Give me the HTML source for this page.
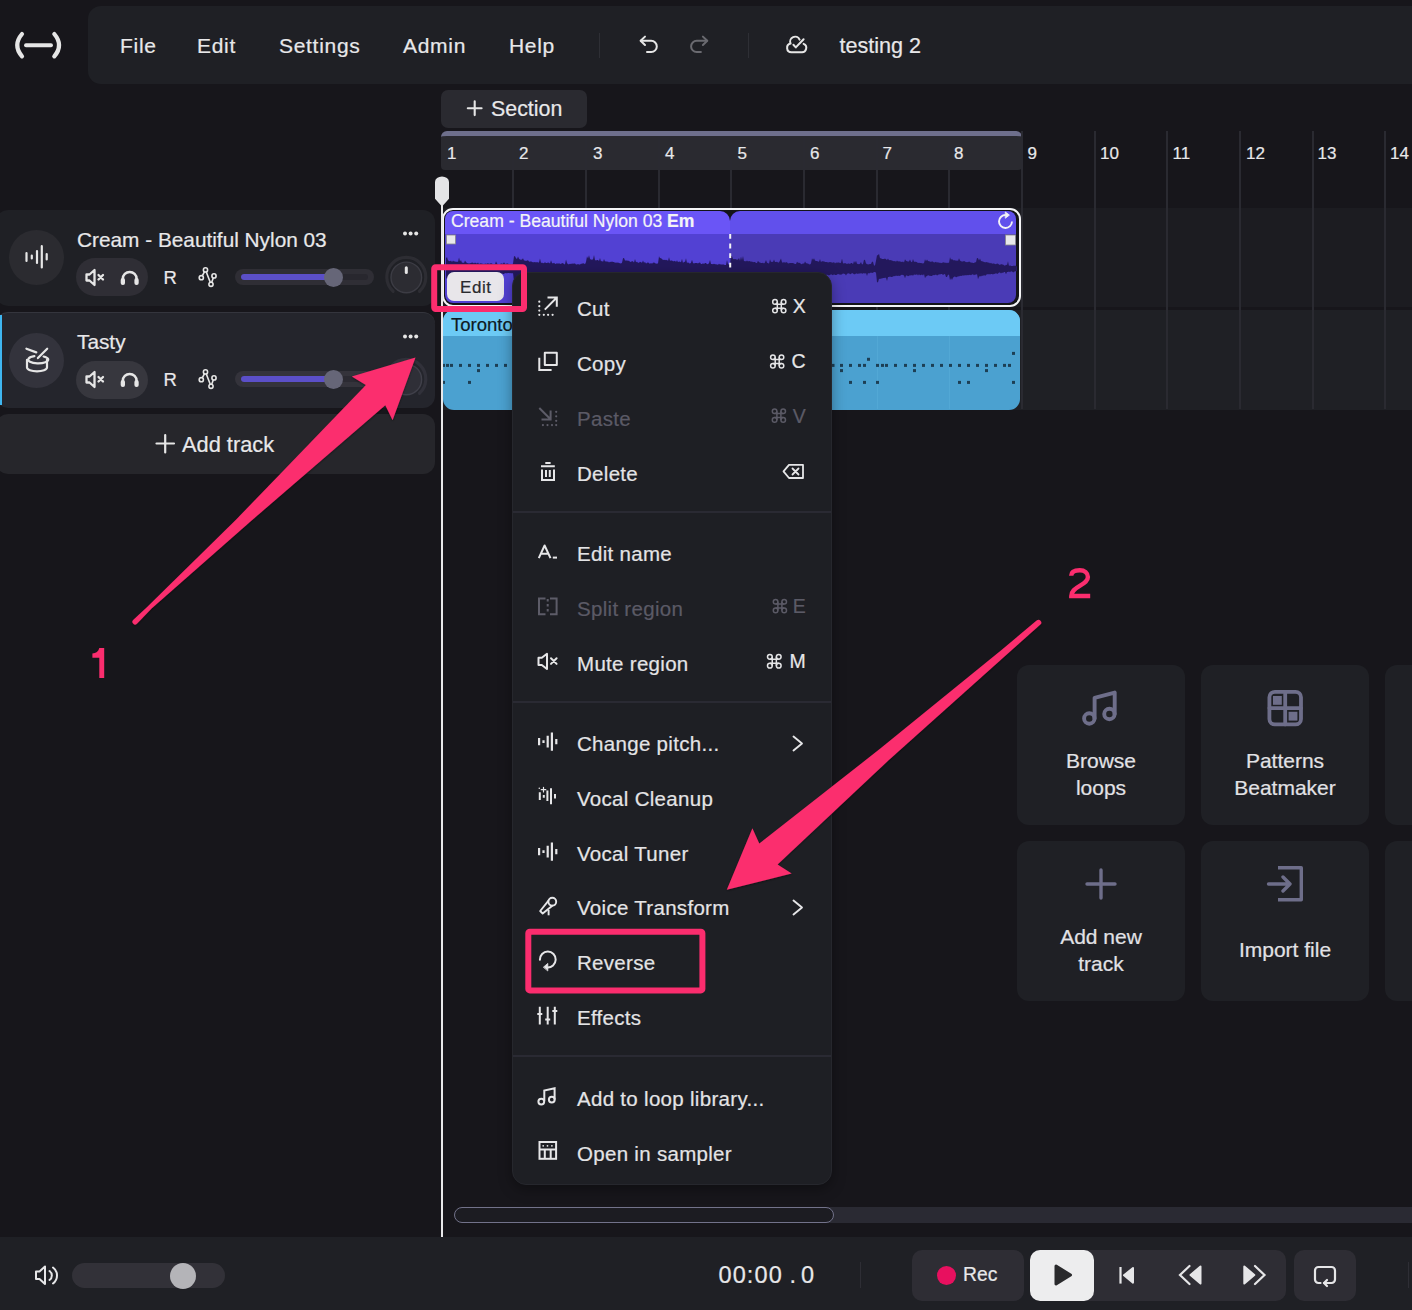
<!DOCTYPE html>
<html><head><meta charset="utf-8">
<style>
*{margin:0;padding:0;box-sizing:border-box}
html,body{width:1412px;height:1310px;overflow:hidden;background:#17161b;font-family:"Liberation Sans",sans-serif;color:#e8e8ea}
.a{position:absolute}
.t{position:absolute;white-space:nowrap;line-height:1;-webkit-text-stroke:0.2px currentColor}
svg{position:absolute;overflow:visible}
</style></head><body>

<!-- LOGO -->
<svg class="a" style="left:0;top:0" width="90" height="90">
 <path d="M22,34 Q12.5,45.2 22,56.3" fill="none" stroke="#e6e6e6" stroke-width="4.2" stroke-linecap="round"/>
 <path d="M54.3,34 Q63.8,45.2 54.3,56.3" fill="none" stroke="#e6e6e6" stroke-width="4.2" stroke-linecap="round"/>
 <path d="M26,45.2 H51" stroke="#e6e6e6" stroke-width="3.9" stroke-linecap="round"/>
</svg>

<!-- TOP BAR -->
<div class="a" style="left:88px;top:6px;width:1340px;height:77.5px;background:#1f2025;border-radius:13px"></div>
<div class="t" style="left:120px;top:35.2px;font-size:21px;letter-spacing:0.7px">File</div>
<div class="t" style="left:197px;top:35.2px;font-size:21px;letter-spacing:0.7px">Edit</div>
<div class="t" style="left:279px;top:35.2px;font-size:21px;letter-spacing:0.7px">Settings</div>
<div class="t" style="left:403px;top:35.2px;font-size:21px;letter-spacing:0.7px">Admin</div>
<div class="t" style="left:509px;top:35.2px;font-size:21px;letter-spacing:0.7px">Help</div>
<div class="a" style="left:599px;top:33px;width:1px;height:25px;background:#2e2f35"></div>
<div class="a" style="left:748px;top:33px;width:1px;height:25px;background:#2e2f35"></div>
<div class="t" style="left:839.5px;top:34.8px;font-size:21.6px">testing 2</div>

<!-- SECTION BUTTON -->
<div class="a" style="left:441px;top:90px;width:146px;height:38px;background:#2a2a30;border-radius:7px"></div>
<div class="t" style="left:491px;top:99px;font-size:21.4px">Section</div>

<!-- RULER -->
<div class="a" style="left:441px;top:131px;width:581px;height:39px;background:#2a2a30;border-radius:6px 6px 4px 4px;border-top:5px solid #6e6f8c"></div>


<!-- TOP ICONS -->
<svg style="left:0;top:0" width="1" height="1">
 <g fill="none" stroke="#e6e6e6" stroke-width="2" stroke-linecap="round" stroke-linejoin="round">
  <path d="M645,36.6 L640.6,40.8 L645,45"/>
  <path d="M641,40.8 H651.2 a5.6,5.6 0 0 1 0,11.2 H647"/>
 </g>
 <g fill="none" stroke="#6a6a70" stroke-width="2" stroke-linecap="round" stroke-linejoin="round">
  <path d="M702.9,36.6 L707.3,40.8 L702.9,45"/>
  <path d="M706.9,40.8 H696.7 a5.6,5.6 0 0 0 0,11.2 H700.9"/>
 </g>
 <g fill="none" stroke="#e6e6e6" stroke-width="2" stroke-linecap="round" stroke-linejoin="round">
  <path d="M799.6,39.6 A4.9,4.9 0 0 0 790.6,43.6 A4.4,4.4 0 0 0 791.4,52.3 H801.3 A4.4,4.4 0 0 0 803.6,43.9"/>
  <path d="M793.4,44.8 L795.8,47.4 L803.6,39.2"/>
 </g>
</svg>
<svg style="left:0;top:0" width="1" height="1">
 <path d="M467.8,108.2 H481.6 M474.7,101.3 V115.1" stroke="#e6e6e6" stroke-width="2.1" stroke-linecap="round"/>
</svg>

<!-- LANES -->
<div class="a" style="left:443px;top:208px;width:969px;height:99px;background:#1c1c21"></div>
<div class="a" style="left:443px;top:310px;width:969px;height:99.5px;background:#1f2025"></div>

<!-- RULER NUMBERS + GRID -->
<div class="a" style="left:512px;top:136px;width:2px;height:273px;background:#2a2a31"></div><div class="a" style="left:585px;top:136px;width:2px;height:273px;background:#2a2a31"></div><div class="a" style="left:658px;top:136px;width:2px;height:273px;background:#2a2a31"></div><div class="a" style="left:730px;top:136px;width:2px;height:273px;background:#2a2a31"></div><div class="a" style="left:803px;top:136px;width:2px;height:273px;background:#2a2a31"></div><div class="a" style="left:876px;top:136px;width:2px;height:273px;background:#2a2a31"></div><div class="a" style="left:948px;top:136px;width:2px;height:273px;background:#2a2a31"></div><div class="a" style="left:1021px;top:131px;width:2px;height:278px;background:#2a2a31"></div><div class="a" style="left:1094px;top:131px;width:2px;height:278px;background:#2a2a31"></div><div class="a" style="left:1166px;top:131px;width:2px;height:278px;background:#2a2a31"></div><div class="a" style="left:1239px;top:131px;width:2px;height:278px;background:#2a2a31"></div><div class="a" style="left:1312px;top:131px;width:2px;height:278px;background:#2a2a31"></div><div class="a" style="left:1384px;top:131px;width:2px;height:278px;background:#2a2a31"></div><div class="t" style="left:447px;top:144.5px;font-size:17px">1</div><div class="t" style="left:519px;top:144.5px;font-size:17px">2</div><div class="t" style="left:593px;top:144.5px;font-size:17px">3</div><div class="t" style="left:665px;top:144.5px;font-size:17px">4</div><div class="t" style="left:737.5px;top:144.5px;font-size:17px">5</div><div class="t" style="left:810px;top:144.5px;font-size:17px">6</div><div class="t" style="left:882.5px;top:144.5px;font-size:17px">7</div><div class="t" style="left:954px;top:144.5px;font-size:17px">8</div><div class="t" style="left:1027.5px;top:144.5px;font-size:17px">9</div><div class="t" style="left:1100px;top:144.5px;font-size:17px">10</div><div class="t" style="left:1172.5px;top:144.5px;font-size:17px">11</div><div class="t" style="left:1246px;top:144.5px;font-size:17px">12</div><div class="t" style="left:1317.5px;top:144.5px;font-size:17px">13</div><div class="t" style="left:1390px;top:144.5px;font-size:17px">14</div>

<!-- REGION 1 -->
<div class="a" style="left:441.5px;top:208px;width:579px;height:99px;border:2.5px solid #f4f4f6;border-radius:11px;background:#141418">
 <div class="a" style="left:1.4px;top:1.4px;width:571.2px;height:91.2px;border-radius:8px;overflow:hidden;background:#141418">
  <div class="a" style="left:0;top:0;width:285.6px;height:22.2px;background:#6a55f6;border-top-right-radius:10px"></div>
  <div class="a" style="left:285.6px;top:0;width:300px;height:22.2px;background:#6150ec;border-top-left-radius:10px"></div>
  <div class="a" style="left:0;top:22.2px;width:285.6px;height:80px;background:#5241d3"></div>
  <div class="a" style="left:285.6px;top:22.2px;width:300px;height:80px;background:#4a3bb6"></div>
 </div>
</div>
<svg style="left:0;top:0" width="1" height="1">
 <path d="M446,258.3 L447,257.1 L448,260.3 L449,261.1 L450,261.2 L451,260.6 L452,261.9 L453,260.6 L454,261.4 L455,261.3 L456,261.9 L457,261.6 L458,262.1 L459,257.6 L460,261.6 L461,260.0 L462,262.7 L463,262.6 L464,263.0 L465,260.6 L466,262.0 L467,262.9 L468,263.2 L469,263.4 L470,263.2 L471,263.0 L472,262.5 L473,262.8 L474,263.6 L475,262.4 L476,263.2 L477,263.4 L478,262.6 L479,263.9 L480,263.5 L481,263.2 L482,263.7 L483,263.7 L484,264.2 L485,263.6 L486,263.8 L487,263.8 L488,262.9 L489,264.1 L490,263.4 L491,263.3 L492,263.5 L493,264.4 L494,264.1 L495,264.2 L496,261.3 L497,263.6 L498,264.5 L499,264.4 L500,264.4 L501,263.2 L502,263.7 L503,263.8 L504,262.3 L505,263.8 L506,264.1 L507,263.3 L508,263.8 L509,264.1 L510,264.3 L511,264.1 L512,264.7 L513,263.6 L514,256.3 L515,256.3 L516,258.2 L517,259.1 L518,256.5 L519,258.7 L520,259.6 L521,259.8 L522,259.4 L523,258.3 L524,260.6 L525,260.5 L526,261.1 L527,260.4 L528,260.3 L529,261.5 L530,261.7 L531,261.2 L532,262.1 L533,262.2 L534,262.2 L535,261.9 L536,262.4 L537,262.0 L538,262.5 L539,262.6 L540,258.5 L541,262.9 L542,262.5 L543,263.2 L544,263.0 L545,262.3 L546,263.1 L547,263.0 L548,262.5 L549,262.8 L550,263.6 L551,260.2 L552,262.9 L553,263.6 L554,262.7 L555,263.7 L556,263.9 L557,263.1 L558,263.9 L559,263.1 L560,264.0 L561,263.7 L562,263.2 L563,262.9 L564,264.3 L565,264.2 L566,259.6 L567,263.0 L568,264.3 L569,264.3 L570,263.7 L571,264.0 L572,263.6 L573,263.8 L574,263.5 L575,263.4 L576,264.4 L577,264.4 L578,264.0 L579,264.5 L580,264.5 L581,263.8 L582,263.8 L583,263.3 L584,263.5 L585,264.3 L586,262.0 L587,256.3 L588,258.6 L589,255.2 L590,258.7 L591,259.7 L592,259.5 L593,259.6 L594,255.0 L595,260.1 L596,260.5 L597,260.0 L598,259.9 L599,260.9 L600,257.9 L601,261.4 L602,260.7 L603,262.0 L604,259.1 L605,261.6 L606,261.2 L607,261.7 L608,261.6 L609,262.6 L610,261.8 L611,261.9 L612,261.6 L613,262.0 L614,261.9 L615,262.7 L616,262.4 L617,262.8 L618,262.4 L619,263.1 L620,263.3 L621,263.5 L622,262.7 L623,258.3 L624,257.9 L625,260.4 L626,260.5 L627,260.4 L628,260.8 L629,260.7 L630,261.8 L631,262.0 L632,261.1 L633,261.5 L634,262.4 L635,258.9 L636,262.2 L637,261.8 L638,262.8 L639,262.8 L640,261.8 L641,262.2 L642,262.7 L643,260.6 L644,262.7 L645,262.1 L646,263.5 L647,262.9 L648,262.3 L649,263.3 L650,263.7 L651,262.9 L652,263.8 L653,262.7 L654,262.5 L655,262.9 L656,263.7 L657,263.6 L658,263.4 L659,256.3 L660,258.3 L661,258.1 L662,259.3 L663,259.7 L664,260.0 L665,259.8 L666,260.2 L667,259.7 L668,260.9 L669,257.2 L670,260.8 L671,260.5 L672,260.6 L673,261.3 L674,261.2 L675,260.7 L676,261.9 L677,260.2 L678,262.2 L679,261.4 L680,261.7 L681,262.3 L682,258.8 L683,262.9 L684,261.8 L685,262.1 L686,258.3 L687,263.1 L688,262.3 L689,263.2 L690,263.4 L691,262.8 L692,259.7 L693,263.0 L694,263.5 L695,262.9 L696,263.1 L697,262.9 L698,263.5 L699,262.7 L700,262.6 L701,263.9 L702,264.0 L703,263.2 L704,264.1 L705,263.1 L706,263.1 L707,264.3 L708,264.1 L709,263.2 L710,260.0 L711,264.1 L712,264.1 L713,264.3 L714,263.7 L715,264.3 L716,264.3 L717,264.4 L718,264.8 L719,263.7 L720,264.5 L721,264.2 L722,264.8 L723,264.2 L724,264.7 L725,264.9 L726,264.9 L727,260.1 L728,264.3 L729,264.6 L730,264.6 L731,256.3 L732,256.3 L733,259.1 L734,259.2 L735,258.9 L736,259.2 L737,259.8 L738,259.4 L739,257.9 L740,260.7 L741,256.5 L742,260.3 L743,256.0 L744,261.2 L745,261.1 L746,261.4 L747,260.6 L748,261.5 L749,261.1 L750,261.2 L751,261.8 L752,261.5 L753,262.3 L754,262.0 L755,262.0 L756,262.9 L757,263.0 L758,260.7 L759,262.3 L760,262.6 L761,263.1 L762,263.1 L763,262.7 L764,263.4 L765,262.4 L766,260.1 L767,262.8 L768,263.1 L769,263.7 L770,259.3 L771,261.9 L772,261.7 L773,262.1 L774,259.6 L775,262.1 L776,261.9 L777,261.8 L778,262.6 L779,262.4 L780,260.5 L781,258.4 L782,262.2 L783,262.8 L784,262.1 L785,262.7 L786,262.2 L787,262.2 L788,263.4 L789,263.2 L790,263.1 L791,262.9 L792,262.9 L793,263.1 L794,263.4 L795,263.9 L796,263.9 L797,261.8 L798,262.7 L799,262.7 L800,263.0 L801,264.1 L802,264.2 L803,263.2 L804,263.7 L805,261.4 L806,263.0 L807,263.5 L808,263.5 L809,264.2 L810,264.4 L811,263.5 L812,258.3 L813,260.1 L814,258.3 L815,260.6 L816,260.9 L817,260.9 L818,261.5 L819,261.8 L820,259.0 L821,262.2 L822,261.1 L823,261.6 L824,261.3 L825,262.0 L826,262.1 L827,262.0 L828,262.5 L829,262.2 L830,262.1 L831,262.3 L832,262.6 L833,262.7 L834,262.0 L835,263.4 L836,262.5 L837,262.8 L838,262.5 L839,262.4 L840,263.0 L841,262.8 L842,258.6 L843,263.2 L844,263.6 L845,263.1 L846,263.6 L847,263.9 L848,263.6 L849,263.5 L850,264.0 L851,263.1 L852,262.9 L853,264.3 L854,260.9 L855,263.1 L856,260.8 L857,263.7 L858,264.0 L859,264.3 L860,263.7 L861,262.1 L862,264.5 L863,264.1 L864,259.7 L865,260.0 L866,263.6 L867,263.9 L868,264.6 L869,264.3 L870,263.9 L871,263.9 L872,261.8 L873,261.7 L874,265.5 L875,265.5 L876,260.8 L877,255.3 L878,255.3 L879,253.7 L880,258.2 L881,258.2 L882,259.1 L883,258.9 L884,259.0 L885,258.6 L886,259.3 L887,260.1 L888,258.5 L889,260.2 L890,260.0 L891,260.3 L892,260.4 L893,261.0 L894,261.2 L895,261.1 L896,261.8 L897,260.6 L898,261.4 L899,261.2 L900,261.6 L901,261.7 L902,262.1 L903,261.6 L904,262.5 L905,259.3 L906,260.7 L907,261.3 L908,261.4 L909,261.5 L910,259.5 L911,261.7 L912,262.3 L913,259.1 L914,261.7 L915,261.7 L916,261.7 L917,262.2 L918,263.0 L919,262.8 L920,263.1 L921,263.1 L922,263.2 L923,263.4 L924,263.1 L925,259.3 L926,261.3 L927,259.5 L928,261.1 L929,261.2 L930,261.4 L931,262.1 L932,261.3 L933,261.8 L934,262.5 L935,262.2 L936,261.8 L937,262.7 L938,261.9 L939,263.1 L940,262.4 L941,263.3 L942,262.8 L943,262.4 L944,262.3 L945,262.9 L946,262.5 L947,263.2 L948,262.6 L949,263.0 L950,257.3 L951,259.7 L952,258.9 L953,260.1 L954,260.6 L955,259.9 L956,260.9 L957,260.2 L958,260.9 L959,258.3 L960,260.6 L961,261.2 L962,261.6 L963,261.6 L964,261.0 L965,261.6 L966,262.2 L967,262.1 L968,262.3 L969,261.6 L970,262.0 L971,262.8 L972,262.4 L973,263.1 L974,262.9 L975,262.3 L976,262.2 L977,258.1 L978,258.3 L979,260.4 L980,258.5 L981,261.0 L982,261.3 L983,261.4 L984,262.0 L985,262.3 L986,262.2 L987,262.0 L988,262.8 L989,262.4 L990,263.6 L991,262.7 L992,263.7 L993,263.6 L994,263.5 L995,264.1 L996,264.3 L997,263.6 L998,263.8 L999,264.4 L1000,265.1 L1001,264.1 L1002,264.4 L1003,264.6 L1004,265.2 L1005,265.7 L1006,264.7 L1007,265.0 L1008,261.2 L1009,266.0 L1010,265.2 L1011,266.1 L1012,266.0 L1013,265.9 L1014,265.4 L1015,266.1 L1016,265.6 L1017,266.7 L1017,270.9 L1016,271.4 L1015,271.0 L1014,272.3 L1013,272.3 L1012,271.6 L1011,271.3 L1010,272.2 L1009,271.6 L1008,271.9 L1007,272.1 L1006,274.3 L1005,272.0 L1004,271.9 L1003,272.9 L1002,272.4 L1001,273.4 L1000,272.4 L999,272.5 L998,273.6 L997,273.9 L996,272.9 L995,273.9 L994,273.8 L993,274.4 L992,273.9 L991,274.0 L990,274.6 L989,274.0 L988,274.6 L987,274.1 L986,275.3 L985,275.7 L984,275.1 L983,275.9 L982,275.6 L981,276.5 L980,276.1 L979,276.7 L978,279.3 L977,273.9 L976,274.8 L975,274.5 L974,275.2 L973,274.3 L972,274.6 L971,275.3 L970,274.7 L969,275.0 L968,275.2 L967,275.0 L966,275.4 L965,275.1 L964,275.8 L963,275.2 L962,275.7 L961,275.9 L960,275.8 L959,276.5 L958,276.3 L957,276.9 L956,277.3 L955,276.5 L954,276.8 L953,277.8 L952,279.9 L951,277.9 L950,280.3 L949,274.8 L948,274.8 L947,276.9 L946,276.9 L945,274.0 L944,274.3 L943,275.1 L942,274.1 L941,274.0 L940,274.6 L939,274.3 L938,275.0 L937,275.5 L936,274.6 L935,274.9 L934,275.2 L933,275.0 L932,275.9 L931,276.0 L930,275.7 L929,275.8 L928,275.0 L927,276.2 L926,276.3 L925,278.3 L924,274.0 L923,275.5 L922,274.6 L921,274.9 L920,275.2 L919,274.3 L918,275.4 L917,274.2 L916,274.7 L915,274.7 L914,274.6 L913,275.7 L912,275.0 L911,275.6 L910,275.3 L909,275.7 L908,276.2 L907,275.5 L906,275.5 L905,278.3 L904,275.4 L903,275.1 L902,274.8 L901,274.9 L900,275.9 L899,275.8 L898,275.7 L897,276.1 L896,275.5 L895,276.3 L894,276.1 L893,276.6 L892,276.9 L891,277.0 L890,276.5 L889,277.0 L888,277.0 L887,280.9 L886,277.8 L885,277.8 L884,278.1 L883,278.1 L882,278.5 L881,278.4 L880,279.0 L879,278.8 L878,282.3 L877,282.3 L876,272.7 L875,272.1 L874,272.0 L873,272.8 L872,273.0 L871,272.6 L870,272.9 L869,273.5 L868,273.1 L867,276.0 L866,272.9 L865,273.8 L864,272.9 L863,273.5 L862,273.8 L861,273.1 L860,273.8 L859,273.3 L858,274.0 L857,273.4 L856,273.4 L855,274.3 L854,274.2 L853,273.4 L852,273.1 L851,273.9 L850,274.2 L849,273.3 L848,273.6 L847,273.7 L846,275.5 L845,274.1 L844,273.8 L843,273.5 L842,274.2 L841,274.8 L840,274.5 L839,274.6 L838,273.7 L837,274.7 L836,275.0 L835,274.9 L834,274.3 L833,275.2 L832,274.7 L831,274.2 L830,275.1 L829,275.2 L828,275.3 L827,274.5 L826,275.2 L825,274.8 L824,275.3 L823,274.8 L822,275.0 L821,275.4 L820,276.4 L819,275.9 L818,276.0 L817,276.3 L816,276.4 L815,275.9 L814,276.9 L813,277.1 L812,279.3 L811,273.7 L810,273.4 L809,273.0 L808,274.2 L807,273.5 L806,273.7 L805,273.2 L804,276.2 L803,274.1 L802,273.6 L801,273.4 L800,273.6 L799,274.3 L798,275.5 L797,273.9 L796,273.7 L795,274.1 L794,274.3 L793,274.7 L792,273.9 L791,278.2 L790,274.0 L789,273.9 L788,274.8 L787,274.3 L786,274.4 L785,274.4 L784,274.8 L783,275.0 L782,274.2 L781,274.3 L780,275.3 L779,275.2 L778,275.1 L777,275.4 L776,275.8 L775,275.9 L774,276.1 L773,276.2 L772,275.4 L771,275.7 L770,278.3 L769,274.5 L768,273.8 L767,273.7 L766,274.4 L765,274.8 L764,274.8 L763,274.1 L762,274.3 L761,274.6 L760,275.3 L759,275.2 L758,277.1 L757,275.0 L756,274.6 L755,274.9 L754,275.7 L753,275.6 L752,275.3 L751,275.7 L750,276.1 L749,276.0 L748,278.7 L747,276.5 L746,276.4 L745,278.5 L744,275.8 L743,276.7 L742,277.2 L741,276.9 L740,277.0 L739,276.7 L738,279.6 L737,277.9 L736,278.2 L735,281.1 L734,278.7 L733,278.1 L732,281.3 L731,281.3 L730,272.7 L729,272.3 L728,272.8 L727,272.9 L726,273.3 L725,273.2 L724,273.3 L723,272.6 L722,272.2 L721,272.3 L720,273.1 L719,272.5 L718,273.3 L717,273.4 L716,272.8 L715,273.1 L714,277.6 L713,273.5 L712,272.9 L711,273.1 L710,273.5 L709,273.4 L708,273.0 L707,276.7 L706,274.1 L705,273.1 L704,273.2 L703,273.5 L702,274.6 L701,274.2 L700,273.5 L699,273.8 L698,273.6 L697,274.1 L696,274.3 L695,274.9 L694,274.3 L693,274.6 L692,274.0 L691,274.0 L690,274.9 L689,275.0 L688,274.1 L687,274.7 L686,274.3 L685,275.1 L684,274.4 L683,274.4 L682,274.7 L681,275.8 L680,275.2 L679,275.8 L678,276.2 L677,275.6 L676,275.6 L675,275.6 L674,276.4 L673,275.7 L672,276.9 L671,277.1 L670,276.0 L669,279.9 L668,277.3 L667,276.6 L666,277.4 L665,277.5 L664,277.2 L663,277.9 L662,278.5 L661,277.7 L660,278.1 L659,281.3 L658,273.3 L657,274.2 L656,273.9 L655,273.9 L654,274.5 L653,274.6 L652,273.5 L651,274.8 L650,274.1 L649,275.0 L648,274.3 L647,276.4 L646,277.1 L645,274.0 L644,275.3 L643,274.9 L642,278.0 L641,275.3 L640,274.8 L639,275.0 L638,275.5 L637,275.2 L636,274.7 L635,275.7 L634,275.1 L633,276.2 L632,276.0 L631,276.2 L630,275.4 L629,276.0 L628,276.8 L627,277.0 L626,279.7 L625,276.2 L624,276.4 L623,279.3 L622,274.2 L621,274.5 L620,274.6 L619,274.2 L618,274.4 L617,274.1 L616,275.3 L615,274.1 L614,274.5 L613,275.1 L612,275.6 L611,274.5 L610,274.9 L609,275.1 L608,275.4 L607,275.9 L606,276.2 L605,276.0 L604,275.5 L603,275.9 L602,276.2 L601,276.6 L600,275.9 L599,276.0 L598,277.1 L597,276.4 L596,276.5 L595,277.7 L594,280.4 L593,278.2 L592,277.6 L591,277.7 L590,278.1 L589,278.7 L588,281.7 L587,281.3 L586,272.7 L585,277.4 L584,275.3 L583,273.7 L582,273.4 L581,274.0 L580,273.3 L579,273.1 L578,277.2 L577,272.9 L576,273.9 L575,273.1 L574,274.1 L573,273.7 L572,277.2 L571,273.1 L570,273.5 L569,273.0 L568,273.3 L567,275.8 L566,273.1 L565,273.8 L564,273.2 L563,274.0 L562,273.4 L561,273.8 L560,273.8 L559,275.6 L558,274.2 L557,274.2 L556,274.6 L555,273.8 L554,273.6 L553,273.7 L552,274.1 L551,274.6 L550,277.8 L549,274.5 L548,274.3 L547,274.0 L546,274.3 L545,274.1 L544,274.1 L543,274.2 L542,278.2 L541,275.0 L540,275.2 L539,274.9 L538,275.5 L537,275.4 L536,275.5 L535,279.6 L534,275.4 L533,275.7 L532,275.2 L531,275.7 L530,275.7 L529,276.3 L528,281.0 L527,280.5 L526,278.9 L525,276.8 L524,277.3 L523,279.3 L522,276.8 L521,278.0 L520,277.7 L519,282.2 L518,278.2 L517,278.3 L516,278.2 L515,281.3 L514,281.3 L513,273.0 L512,273.4 L511,273.1 L510,273.3 L509,273.1 L508,273.1 L507,273.2 L506,273.3 L505,272.9 L504,274.0 L503,274.1 L502,273.3 L501,273.9 L500,273.6 L499,277.3 L498,273.4 L497,273.7 L496,273.1 L495,273.0 L494,276.8 L493,273.1 L492,274.0 L491,273.8 L490,274.0 L489,274.2 L488,274.4 L487,274.2 L486,274.0 L485,274.3 L484,273.9 L483,274.5 L482,273.9 L481,274.3 L480,274.4 L479,273.7 L478,274.2 L477,273.6 L476,274.5 L475,274.7 L474,274.7 L473,274.7 L472,273.8 L471,276.7 L470,274.6 L469,275.2 L468,274.8 L467,274.4 L466,274.5 L465,275.4 L464,275.2 L463,274.7 L462,275.4 L461,274.4 L460,274.5 L459,279.3 L458,275.8 L457,274.8 L456,277.5 L455,276.3 L454,276.1 L453,276.5 L452,276.6 L451,275.7 L450,276.9 L449,278.7 L448,277.2 L447,277.4 L446,279.3Z" fill="#23185c"/>
 <path d="M730.2,234 V306" stroke="#f4f4f6" stroke-width="2" stroke-dasharray="4.8,4.8"/>
 
 <rect x="446.5" y="235" width="9" height="9" fill="#e8e8ea" stroke="#888" stroke-width="0.8"/>
 <rect x="1005.5" y="235" width="10" height="10" fill="#e8e8ea" stroke="#888" stroke-width="0.8"/>
 <g fill="none" stroke="#f4f4f6" stroke-width="2" stroke-linecap="round">
  <path d="M1012,221.6 A6.5,6.5 0 1 1 1005.8,215" stroke-width="1.9" stroke-linecap="butt"/>
  <path d="M1005.6,212.2 L1009.4,215.1 L1005.6,218 Z" fill="#f4f4f6" stroke-width="0.9" stroke-linejoin="round"/>
 </g>
</svg>
<div class="t" style="left:451px;top:213.2px;font-size:17.6px;color:#f4f4f6">Cream - Beautiful Nylon 03 <b>Em</b></div>

<!-- REGION 2 -->
<div class="a" style="left:443px;top:310px;width:577px;height:100px;border-radius:11px;overflow:hidden;background:#4ba1d0">
  <div class="a" style="left:0;top:0;width:577px;height:26px;background:#6ccaf5"></div>
</div>
<div class="t" style="left:451px;top:316px;font-size:18.5px;color:#0e1a22">Toronto</div>
<svg style="left:0;top:0" width="1" height="1"><path d="M877.5,336 V409 M949.5,336 V409" stroke="#52a8d5" stroke-width="1"/><g fill="#1d3f55"><rect x="442.0" y="363.9" width="3" height="3"/><rect x="446.0" y="363.9" width="3" height="3"/><rect x="450.0" y="363.9" width="3" height="3"/><rect x="459.0" y="363.9" width="3" height="3"/><rect x="468.0" y="363.9" width="3" height="3"/><rect x="477.0" y="363.9" width="3" height="3"/><rect x="486.0" y="363.9" width="3" height="3"/><rect x="495.0" y="363.9" width="3" height="3"/><rect x="504.0" y="363.9" width="3" height="3"/><rect x="831.5" y="363.9" width="3" height="3"/><rect x="840.0" y="363.9" width="3" height="3"/><rect x="849.0" y="363.9" width="3" height="3"/><rect x="858.0" y="363.9" width="3" height="3"/><rect x="863.0" y="363.9" width="3" height="3"/><rect x="876.0" y="363.9" width="3" height="3"/><rect x="881.0" y="363.9" width="3" height="3"/><rect x="885.0" y="363.9" width="3" height="3"/><rect x="894.0" y="363.9" width="3" height="3"/><rect x="904.0" y="363.9" width="3" height="3"/><rect x="913.0" y="363.9" width="3" height="3"/><rect x="922.0" y="363.9" width="3" height="3"/><rect x="931.0" y="363.9" width="3" height="3"/><rect x="940.0" y="363.9" width="3" height="3"/><rect x="949.0" y="363.9" width="3" height="3"/><rect x="958.0" y="363.9" width="3" height="3"/><rect x="967.0" y="363.9" width="3" height="3"/><rect x="976.0" y="363.9" width="3" height="3"/><rect x="985.0" y="363.9" width="3" height="3"/><rect x="994.0" y="363.9" width="3" height="3"/><rect x="1003.0" y="363.9" width="3" height="3"/><rect x="1008.0" y="363.9" width="3" height="3"/><rect x="477.0" y="369.1" width="3" height="3"/><rect x="840.0" y="369.1" width="3" height="3"/><rect x="913.0" y="369.1" width="3" height="3"/><rect x="985.0" y="369.1" width="3" height="3"/><rect x="867.0" y="357.8" width="3" height="3"/><rect x="1012.0" y="351.9" width="3" height="3"/><rect x="442.0" y="380.9" width="3" height="3"/><rect x="468.0" y="380.9" width="3" height="3"/><rect x="849.0" y="380.9" width="3" height="3"/><rect x="863.0" y="380.9" width="3" height="3"/><rect x="876.0" y="380.9" width="3" height="3"/><rect x="958.0" y="380.9" width="3" height="3"/><rect x="967.0" y="380.9" width="3" height="3"/><rect x="1012.0" y="380.9" width="3" height="3"/><rect x="513.1" y="363.9" width="3" height="3"/><rect x="522.1" y="363.9" width="3" height="3"/><rect x="531.1" y="363.9" width="3" height="3"/><rect x="540.1" y="363.9" width="3" height="3"/><rect x="549.1" y="363.9" width="3" height="3"/><rect x="558.1" y="363.9" width="3" height="3"/><rect x="567.1" y="363.9" width="3" height="3"/><rect x="576.1" y="363.9" width="3" height="3"/><rect x="585.7" y="363.9" width="3" height="3"/><rect x="594.7" y="363.9" width="3" height="3"/><rect x="603.7" y="363.9" width="3" height="3"/><rect x="612.7" y="363.9" width="3" height="3"/><rect x="621.7" y="363.9" width="3" height="3"/><rect x="630.7" y="363.9" width="3" height="3"/><rect x="639.7" y="363.9" width="3" height="3"/><rect x="648.7" y="363.9" width="3" height="3"/><rect x="658.3" y="363.9" width="3" height="3"/><rect x="667.3" y="363.9" width="3" height="3"/><rect x="676.3" y="363.9" width="3" height="3"/><rect x="685.3" y="363.9" width="3" height="3"/><rect x="694.3" y="363.9" width="3" height="3"/><rect x="703.3" y="363.9" width="3" height="3"/><rect x="712.3" y="363.9" width="3" height="3"/><rect x="721.3" y="363.9" width="3" height="3"/><rect x="730.9" y="363.9" width="3" height="3"/><rect x="739.9" y="363.9" width="3" height="3"/><rect x="748.9" y="363.9" width="3" height="3"/><rect x="757.9" y="363.9" width="3" height="3"/><rect x="766.9" y="363.9" width="3" height="3"/><rect x="775.9" y="363.9" width="3" height="3"/><rect x="784.9" y="363.9" width="3" height="3"/><rect x="793.9" y="363.9" width="3" height="3"/></g></svg>


<!-- EDIT BUTTON (on region, under menu) -->
<div class="a" style="left:447px;top:272px;width:57px;height:29px;background:#e8e6ea;border-radius:7px"></div>
<div class="t" style="left:460px;top:278.5px;font-size:17px;color:#2a2a2e;letter-spacing:0.6px">Edit</div>

<!-- PLAYHEAD -->
<div class="a" style="left:441px;top:200px;width:2px;height:1037px;background:#e8e8ea"></div>
<svg style="left:0;top:0" width="1" height="1">
 <path d="M435,182 a7,5.5 0 0 1 14,0 V198.8 L442,206.6 L435,198.8Z" fill="#e4e4e6"/>
</svg>


<!-- CARDS -->
<div class="a" style="left:1017px;top:665px;width:168px;height:160px;background:#1f2025;border-radius:12px"></div>
<div class="a" style="left:1201px;top:665px;width:168px;height:160px;background:#1f2025;border-radius:12px"></div>
<div class="a" style="left:1385px;top:665px;width:168px;height:160px;background:#1f2025;border-radius:12px"></div>
<div class="a" style="left:1017px;top:841px;width:168px;height:160px;background:#1f2025;border-radius:12px"></div>
<div class="a" style="left:1201px;top:841px;width:168px;height:160px;background:#1f2025;border-radius:12px"></div>
<div class="a" style="left:1385px;top:841px;width:168px;height:160px;background:#1f2025;border-radius:12px"></div>
<div class="t" style="left:1017px;width:168px;text-align:center;top:746.5px;font-size:21px;line-height:27px;color:#e2e2e6">Browse<br>loops</div>
<div class="t" style="left:1201px;width:168px;text-align:center;top:746.5px;font-size:21px;line-height:27px;color:#e2e2e6">Patterns<br>Beatmaker</div>
<div class="t" style="left:1017px;width:168px;text-align:center;top:922.5px;font-size:21px;line-height:27px;color:#e2e2e6">Add new<br>track</div>
<div class="t" style="left:1201px;width:168px;text-align:center;top:935.5px;font-size:21px;line-height:27px;color:#e2e2e6">Import file</div>
<svg style="left:0;top:0" width="1" height="1">
 <g fill="none" stroke="#6e6e8a" stroke-width="3.4" stroke-linecap="round" stroke-linejoin="round">
  <circle cx="1089.3" cy="718.5" r="5.2" stroke-width="3.9"/>
  <circle cx="1109.4" cy="714" r="5.2" stroke-width="3.9"/>
  <path d="M1094.6,718.5 V697.8 L1114.7,692.6 V714" stroke-width="3.9"/>
  <rect x="1269.4" y="691.8" width="31.6" height="32.6" rx="5.5" stroke-width="3.8"/>
  <path d="M1285.2,691.8 V724.4 M1269.4,708.1 H1301" stroke-width="3.8"/>
  <path d="M1101,870 V898 M1087,884 H1115"/>
  <path d="M1278,867.8 H1301.3 V899.8 H1278" stroke-linecap="butt"/>
  <path d="M1268.5,884 H1290 M1283,877 L1290,884 L1283,891"/>
 </g>
 <rect x="1273" y="696" width="8.8" height="8.8" fill="#6e6e8a"/>
 <rect x="1288.6" y="711.8" width="8.8" height="8.8" fill="#6e6e8a"/>
</svg>

<!-- SCROLLBAR -->
<div class="a" style="left:820px;top:1207px;width:592px;height:16px;background:#2a2a33"></div>
<div class="a" style="left:454px;top:1207px;width:380px;height:16px;background:#1c1c22;border:1.3px solid #72728a;border-radius:8px"></div>

<!-- TRACK PANELS -->
<div class="a" style="left:-4px;top:210px;width:439px;height:96px;background:#1f2025;border-radius:12px"></div>
<div class="a" style="left:-4px;top:312px;width:439px;height:96px;background:#24252c;border-radius:12px;border-top:1px solid #34353d"></div>
<div class="a" style="left:0;top:315px;width:2px;height:90px;background:#3fb6f0"></div>
<div class="a" style="left:-4px;top:414px;width:439px;height:60px;background:#26262b;border-radius:12px"></div>


<!-- TRACK 1 CONTENT -->
<div class="a" style="left:9px;top:230px;width:55px;height:55px;border-radius:50%;background:#2b2b30"></div>
<svg style="left:0;top:0" width="1" height="1">
 <g stroke="#e6e6e6" stroke-width="2.2" stroke-linecap="round">
  <path d="M26.5,253 V261 M31.8,255.5 V258.5 M37,251 V263 M41.8,246.2 V267.5 M46.7,254 V259.5"/>
 </g>
</svg>
<div class="t" style="left:77px;top:230px;font-size:20.8px">Cream - Beautiful Nylon 03</div>
<div class="a" style="left:76px;top:258px;width:72px;height:38px;border-radius:19px;background:#2f2e35"></div>
<div class="t" style="left:163.5px;top:269.3px;font-size:18.5px">R</div>
<div class="a" style="left:235px;top:269px;width:139px;height:16px;border-radius:8px;background:#2f2e35"></div>
<div class="a" style="left:241px;top:274px;width:127px;height:6px;border-radius:3px;background:#28272e"></div>
<div class="a" style="left:241px;top:274px;width:92px;height:6px;border-radius:3px;background:#5b4fc8"></div>
<div class="a" style="left:324px;top:268px;width:19px;height:19px;border-radius:50%;background:#666678"></div>

<!-- TRACK 2 CONTENT -->
<div class="a" style="left:9px;top:333px;width:55px;height:55px;border-radius:50%;background:#33333c"></div>
<svg style="left:0;top:0" width="1" height="1">
 <g fill="none" stroke="#e6e6e6" stroke-width="2" stroke-linecap="round">
  <path d="M34.4,356.2 A10,3.7 0 1 0 43.6,356.5" stroke-width="2.2"/>
  <path d="M27,359.8 V367.6 A10,3.7 0 0 0 47,367.6 V359.8" stroke-width="2.2"/>
  <path d="M26.4,348.7 L36.3,352.4 M47.2,348.7 L37.9,358.1" stroke-width="2.2"/>
 </g>
</svg>
<div class="t" style="left:77px;top:332px;font-size:20.8px">Tasty</div>
<div class="a" style="left:76px;top:361px;width:72px;height:38px;border-radius:19px;background:#37373e"></div>
<div class="t" style="left:163.5px;top:370.5px;font-size:18.5px">R</div>
<div class="a" style="left:235px;top:371px;width:139px;height:16px;border-radius:8px;background:#34333b"></div>
<div class="a" style="left:241px;top:376px;width:127px;height:6px;border-radius:3px;background:#2b2a32"></div>
<div class="a" style="left:241px;top:376px;width:92px;height:6px;border-radius:3px;background:#5b4fc8"></div>
<div class="a" style="left:324px;top:370px;width:19px;height:19px;border-radius:50%;background:#666678"></div>

<svg style="left:0;top:0" width="1" height="1">
 <defs>
  <g id="mute" fill="none" stroke="#e6e6e6" stroke-width="2.3" stroke-linejoin="round" stroke-linecap="round">
   <path d="M0,-3 H3 L8,-7.5 V7.5 L3,3 H0Z"/>
   <path d="M12,-2.5 L16.5,2 M16.5,-2.5 L12,2"/>
  </g>
  <g id="head" fill="none" stroke="#e6e6e6" stroke-width="2.2" stroke-linecap="round">
   <path d="M2.3,5 V1.8 A6.9,6.9 0 0 1 16.1,1.8 V5" stroke-width="2.5"/>
   <rect x="0.2" y="0.9" width="4.3" height="7.2" rx="2" fill="#e6e6e6" stroke="none"/>
   <rect x="13.9" y="0.9" width="4.3" height="7.2" rx="2" fill="#e6e6e6" stroke="none"/>
  </g>
  <g id="auto" fill="none" stroke="#e6e6e6" stroke-width="1.6">
   <path d="M2.3,7.7 L6.5,-0.1 L12,14.3 L15,5.9"/>
   <circle cx="2.3" cy="7.7" r="2.1" fill="#1f2025"/><circle cx="6.5" cy="-0.1" r="2.1" fill="#1f2025"/>
   <circle cx="12" cy="14.3" r="2.1" fill="#1f2025"/><circle cx="15" cy="5.9" r="2.1" fill="#1f2025"/>
  </g>
  <g id="dots" fill="#e6e6e6"><circle cx="0" cy="0" r="2"/><circle cx="5.6" cy="0" r="2"/><circle cx="11.2" cy="0" r="2"/></g>
 </defs>
 <use href="#mute" x="86.5" y="277.5"/>
 <use href="#head" x="120.5" y="277"/>
 <use href="#auto" x="199" y="270"/>
 <use href="#dots" x="405" y="233.5"/>
 <use href="#mute" x="86.5" y="379.5"/>
 <use href="#head" x="120.5" y="379"/>
 <use href="#auto" x="199" y="372"/>
 <use href="#dots" x="405" y="336.5"/>
 <!-- knobs -->
 <g fill="none">
  <path d="M393.1,291.3 A19.5,19.5 0 1 1 419.5,291.3" stroke="#2d2d33" stroke-width="3.2" stroke-linecap="round"/>
  <circle cx="406.3" cy="277.4" r="15.3" fill="#2c2c32" stroke="#3c3c44" stroke-width="1.4"/>
  <path d="M406.3,267.8 V272.6" stroke="#e6e6e6" stroke-width="3" stroke-linecap="round"/>
  <path d="M393.1,393.3 A19.5,19.5 0 1 1 419.5,393.3" stroke="#31313a" stroke-width="3.2" stroke-linecap="round"/>
  <circle cx="406.3" cy="379.4" r="15.3" fill="#2f2f37" stroke="#40404a" stroke-width="1.4"/>
 </g>
 <path d="M156.5,443.5 H174 M165.2,435 V452.5" stroke="#e6e6e6" stroke-width="2.2" stroke-linecap="round"/>
</svg>
<div class="t" style="left:182px;top:433.5px;font-size:21.8px">Add track</div>


<!-- CONTEXT MENU -->
<div class="a" style="left:512px;top:272px;width:320px;height:913px;background:#1e1f24;border-radius:14px;box-shadow:0 4px 14px rgba(0,0,0,0.35);border:1px solid #26272d"></div>
<div class="a" style="left:513px;top:511px;width:318px;height:2px;background:#2a2a33"></div>
<div class="a" style="left:513px;top:701px;width:318px;height:2px;background:#2a2a33"></div>
<div class="a" style="left:513px;top:1055px;width:318px;height:2px;background:#2a2a33"></div>
<div class="t" style="left:577px;top:298.6px;font-size:20.5px;color:#e4e4e6;letter-spacing:0.3px">Cut</div>
<div class="t" style="left:705.7px;width:100px;text-align:right;top:297.4px;font-size:19.5px;color:#e6e6e8">X</div>
<div class="t" style="left:577px;top:353.6px;font-size:20.5px;color:#e4e4e6;letter-spacing:0.3px">Copy</div>
<div class="t" style="left:705.7px;width:100px;text-align:right;top:352.4px;font-size:19.5px;color:#e6e6e8">C</div>
<div class="t" style="left:577px;top:408.6px;font-size:20.5px;color:#5b5a66;letter-spacing:0.3px">Paste</div>
<div class="t" style="left:705.7px;width:100px;text-align:right;top:407.4px;font-size:19.5px;color:#5b5a66">V</div>
<div class="t" style="left:577px;top:463.6px;font-size:20.5px;color:#e4e4e6;letter-spacing:0.3px">Delete</div>
<div class="t" style="left:577px;top:543.6px;font-size:20.5px;color:#e4e4e6;letter-spacing:0.3px">Edit name</div>
<div class="t" style="left:577px;top:598.6px;font-size:20.5px;color:#5b5a66;letter-spacing:0.3px">Split region</div>
<div class="t" style="left:705.7px;width:100px;text-align:right;top:597.4px;font-size:19.5px;color:#5b5a66">E</div>
<div class="t" style="left:577px;top:653.6px;font-size:20.5px;color:#e4e4e6;letter-spacing:0.3px">Mute region</div>
<div class="t" style="left:705.7px;width:100px;text-align:right;top:652.4px;font-size:19.5px;color:#e6e6e8">M</div>
<div class="t" style="left:577px;top:733.6px;font-size:20.5px;color:#e4e4e6;letter-spacing:0.3px">Change pitch...</div>
<div class="t" style="left:577px;top:788.6px;font-size:20.5px;color:#e4e4e6;letter-spacing:0.3px">Vocal Cleanup</div>
<div class="t" style="left:577px;top:843.6px;font-size:20.5px;color:#e4e4e6;letter-spacing:0.3px">Vocal Tuner</div>
<div class="t" style="left:577px;top:897.6px;font-size:20.5px;color:#e4e4e6;letter-spacing:0.3px">Voice Transform</div>
<div class="t" style="left:577px;top:952.6px;font-size:20.5px;color:#e4e4e6;letter-spacing:0.3px">Reverse</div>
<div class="t" style="left:577px;top:1007.6px;font-size:20.5px;color:#e4e4e6;letter-spacing:0.3px">Effects</div>
<div class="t" style="left:577px;top:1088.7px;font-size:20.5px;color:#e4e4e6;letter-spacing:0.3px">Add to loop library...</div>
<div class="t" style="left:577px;top:1143.7px;font-size:20.5px;color:#e4e4e6;letter-spacing:0.3px">Open in sampler</div>


<svg style="left:0;top:0" width="1" height="1">
 <g fill="none" stroke="#e6e6e8" stroke-width="2" stroke-linecap="round" stroke-linejoin="round">
  <!-- cut -->
  <path d="M544.8,309.6 L556.6,297.8 M547.5,297.6 H556.8 V306.8" stroke-linecap="butt" stroke-linejoin="miter"/>
  <!-- copy -->
  <path d="M539.3,357.7 V370 H551.6" stroke-linecap="butt" stroke-linejoin="miter"/>
  <rect x="544.8" y="352.8" width="12" height="12.1"/>
  <!-- delete -->
  <path d="M545.3,462.9 H550.6 M541,466.3 H554.8" stroke-linecap="butt"/>
  <path d="M542,469.5 V480 H554 V469.5" stroke-linecap="butt" stroke-linejoin="miter"/>
  <path d="M546,470 V477 M549.8,470 V477" stroke-linecap="butt"/>
  <!-- delete key -->
  <path d="M789,464.8 H803 V478 H789 L783.5,471.4 Z" stroke-width="1.8"/>
  <path d="M792.5,468.5 L798.5,474.5 M798.5,468.5 L792.5,474.5" stroke-width="1.8"/>
  <!-- edit name -->
  <path d="M538.8,558.2 L544.6,545.5 L550.5,558.2 M540.8,553.8 H548.5" stroke-linecap="butt"/>
  <path d="M552.8,557.6 H557" stroke-linecap="butt"/>
  <!-- mute region -->
  <path d="M538.5,657.8 H541.8 L547,653.8 V669 L541.8,665 H538.5 Z"/>
  <path d="M551,658.3 L556.6,663.9 M556.6,658.3 L551,663.9"/>
  <!-- pitch -->
  <path d="M539.1,738 V745.3 M543.5,740.3 V743 M547.7,735.8 V747.5 M551.9,732.5 V750.7 M556.3,739 V744.2" stroke-linecap="butt" stroke-width="2.2"/>
  <!-- cleanup -->
  <path d="M539.8,792.2 V800 M543.8,795 V797.8 M547.4,790.6 V801 M551,788.3 V804.3 M555,793.9 V798.4" stroke-linecap="butt" stroke-width="2"/>
  <path d="M543.5,787.3 V792 M541.2,789.7 H545.8" stroke-width="1.2"/>
  <circle cx="539.3" cy="788.2" r="0.8" fill="#e6e6e8" stroke="none"/>
  <!-- tuner -->
  <path d="M539.1,848 V855.3 M543.5,850.3 V853 M547.7,845.8 V857.5 M551.9,842.5 V860.7 M556.3,849 V854.2" stroke-linecap="butt" stroke-width="2.2"/>
  <!-- mic -->
  <path d="M548.3,900.8 L540.2,911 L542.7,913.6 L552.3,905.7" stroke-width="1.9"/>
  <circle cx="552.3" cy="901.7" r="3.9" stroke-width="1.9"/>
  <path d="M548.6,910 V915.3" stroke-width="1.9" stroke-linecap="butt"/>
  <!-- reverse -->
  <path d="M539.9,959.8 A7.9,7.9 0 1 1 547.2,967.4"/>
  <path d="M543.6,967 L547.8,963.4 L547.8,970.6 Z" fill="#e6e6e8" stroke-width="0.8"/>
  <!-- effects -->
  <path d="M539.8,1006.7 V1024.4 M547.7,1006.7 V1024.4 M554.8,1006.7 V1024.4" stroke-linecap="butt"/>
  <path d="M537.3,1013.9 H542.3 M545.2,1019.4 H550.2 M552.3,1011.1 H557.3" stroke-linecap="butt"/>
  <!-- note -->
  <circle cx="541.3" cy="1101.6" r="2.9"/>
  <circle cx="551.8" cy="1099.6" r="2.9"/>
  <path d="M544.3,1101 V1090.5 L554.6,1088.3 V1099.5" stroke-linecap="butt" stroke-linejoin="miter"/>
  <!-- sampler -->
  <rect x="539.5" y="1142" width="16.6" height="16.8" stroke-linejoin="miter"/>
  <path d="M539.5,1149.4 H556.1 M544.8,1149.4 V1158.8 M550.7,1149.4 V1158.8" stroke-linecap="butt"/>
  <circle cx="543.2" cy="1145.8" r="0.9" fill="#e6e6e8" stroke="none"/>
  <circle cx="547.5" cy="1145.8" r="0.9" fill="#e6e6e8" stroke="none"/>
  <circle cx="551.9" cy="1145.8" r="0.9" fill="#e6e6e8" stroke="none"/>
  <!-- chevrons -->
  <path d="M793.5,736.5 L802,743.5 L793.5,750.5" stroke-width="1.9"/>
  <path d="M793.5,900.5 L802,907.5 L793.5,914.5" stroke-width="1.9"/>
 </g>
 <g fill="#e6e6e8">
  <circle cx="539.3" cy="301.7" r="1.1"/><circle cx="539.3" cy="306.2" r="1.1"/><circle cx="539.3" cy="310.6" r="1.1"/><circle cx="539.3" cy="314.8" r="1.1"/>
  <circle cx="543.8" cy="314.8" r="1.1"/><circle cx="548.1" cy="314.8" r="1.1"/><circle cx="552.6" cy="314.8" r="1.1"/>
 </g>
 <g fill="none" stroke="#5d5c68" stroke-width="2">
  <path d="M539.3,408 L550.3,419 M541.5,419.4 H550.6 V410.6" />
  <path d="M545.5,598.5 H539 V614.3 H545.5 M550,598.5 H556.6 V614.3 H550"/>
  <path d="M547.7,599 V614" stroke-dasharray="2.5,2.5"/>
 </g>
 <g fill="#5d5c68">
  <circle cx="556.2" cy="411.8" r="1.1"/><circle cx="556.2" cy="416.3" r="1.1"/><circle cx="556.2" cy="420.8" r="1.1"/><circle cx="556.2" cy="425.1" r="1.1"/>
  <circle cx="542.9" cy="425.1" r="1.1"/><circle cx="547.5" cy="425.1" r="1.1"/><circle cx="552" cy="425.1" r="1.1"/>
 </g>
</svg>

<svg style="left:0;top:0" width="1" height="1"><g fill="none" stroke="#e4e4e6" stroke-width="1.5"><path d="M777.30,301.90 V310.50 M781.30,301.90 V310.50 M775.00,304.20 H783.60 M775.00,308.20 H783.60"/><circle cx="775.00" cy="301.90" r="2.30"/><circle cx="775.00" cy="310.50" r="2.30"/><circle cx="783.60" cy="301.90" r="2.30"/><circle cx="783.60" cy="310.50" r="2.30"/></g><g fill="none" stroke="#e4e4e6" stroke-width="1.5"><path d="M775.20,357.20 V365.80 M779.20,357.20 V365.80 M772.90,359.50 H781.50 M772.90,363.50 H781.50"/><circle cx="772.90" cy="357.20" r="2.30"/><circle cx="772.90" cy="365.80" r="2.30"/><circle cx="781.50" cy="357.20" r="2.30"/><circle cx="781.50" cy="365.80" r="2.30"/></g><g fill="none" stroke="#5b5a66" stroke-width="1.5"><path d="M776.90,411.30 V419.90 M780.90,411.30 V419.90 M774.60,413.60 H783.20 M774.60,417.60 H783.20"/><circle cx="774.60" cy="411.30" r="2.30"/><circle cx="774.60" cy="419.90" r="2.30"/><circle cx="783.20" cy="411.30" r="2.30"/><circle cx="783.20" cy="419.90" r="2.30"/></g><g fill="none" stroke="#5b5a66" stroke-width="1.5"><path d="M777.90,601.80 V610.40 M781.90,601.80 V610.40 M775.60,604.10 H784.20 M775.60,608.10 H784.20"/><circle cx="775.60" cy="601.80" r="2.30"/><circle cx="775.60" cy="610.40" r="2.30"/><circle cx="784.20" cy="601.80" r="2.30"/><circle cx="784.20" cy="610.40" r="2.30"/></g><g fill="none" stroke="#e4e4e6" stroke-width="1.5"><path d="M772.24,656.77 V665.63 M776.36,656.77 V665.63 M769.87,659.14 H778.73 M769.87,663.26 H778.73"/><circle cx="769.87" cy="656.77" r="2.37"/><circle cx="769.87" cy="665.63" r="2.37"/><circle cx="778.73" cy="656.77" r="2.37"/><circle cx="778.73" cy="665.63" r="2.37"/></g></svg>
<!-- BOTTOM BAR -->
<div class="a" style="left:0;top:1237px;width:1412px;height:73px;background:#1f2025"></div>


<svg style="left:0;top:0" width="1" height="1">
 <g fill="none" stroke="#e6e6e8" stroke-width="2" stroke-linejoin="round" stroke-linecap="round">
  <path d="M36,1271.5 H39.5 L45,1266.5 V1284 L39.5,1279 H36 Z"/>
  <path d="M49.5,1271 A5.5,5.5 0 0 1 49.5,1280 M53,1267.5 A10,10 0 0 1 53,1283.5"/>
 </g>
</svg>
<div class="a" style="left:72px;top:1263px;width:153px;height:25px;background:#323138;border-radius:12.5px"></div>
<div class="a" style="left:170px;top:1262.5px;width:26px;height:26px;background:#b4b4b8;border-radius:50%"></div>
<div class="t" style="left:718.5px;top:1264.4px;font-size:23.5px;letter-spacing:1.1px">00:00</div>
<div class="t" style="left:789.5px;top:1264.4px;font-size:23.5px">.</div>
<div class="t" style="left:801px;top:1264.4px;font-size:23.5px">0</div>
<div class="a" style="left:860px;top:1262px;width:1px;height:26px;background:#2e2e35"></div>
<div class="a" style="left:912px;top:1250px;width:112px;height:51px;background:#2e2d34;border-radius:10px"></div>
<div class="a" style="left:937px;top:1266px;width:19px;height:19px;background:#e8105f;border-radius:50%"></div>
<div class="t" style="left:963px;top:1264.9px;font-size:19.3px">Rec</div>
<div class="a" style="left:1030px;top:1250px;width:256px;height:51px;background:#2e2d34;border-radius:10px"></div>
<div class="a" style="left:1030px;top:1250px;width:64px;height:51px;background:#ededee;border-radius:10px"></div>
<div class="a" style="left:1294px;top:1250px;width:62px;height:51px;background:#2e2d34;border-radius:10px"></div>
<div class="a" style="left:1408px;top:1262px;width:1px;height:26px;background:#2e2e35"></div>
<svg style="left:0;top:0" width="1" height="1">
 <path d="M1056,1266 L1070.5,1275 L1056,1284 Z" fill="#2a2a2c" stroke="#2a2a2c" stroke-width="3" stroke-linejoin="round"/>
 <g fill="#e6e6e8" stroke="#e6e6e8" stroke-linejoin="round">
  <path d="M1120.5,1267 V1283.6" stroke-width="2.2"/>
  <path d="M1133,1268 L1124,1275.3 L1133,1282.6Z" stroke-width="2"/>
  <path d="M1189.5,1266 L1180,1275 L1189.5,1284" fill="none" stroke-width="2.2" stroke-linecap="round" stroke-linejoin="miter"/>
  <path d="M1200.5,1266.5 L1190.5,1275 L1200.5,1283.5Z" stroke-width="2"/>
  <path d="M1244.3,1266.5 L1254.3,1275 L1244.3,1283.5Z" stroke-width="2"/>
  <path d="M1255,1266 L1264.5,1275 L1255,1284" fill="none" stroke-width="2.2" stroke-linecap="round" stroke-linejoin="miter"/>
 </g>
 <g fill="none" stroke="#e6e6e8" stroke-width="2.2" stroke-linecap="round" stroke-linejoin="round">
  <path d="M1320.5,1283 H1318.5 a3.5,3.5 0 0 1 -3.5,-3.5 V1270.5 a3.5,3.5 0 0 1 3.5,-3.5 H1331.5 a3.5,3.5 0 0 1 3.5,3.5 V1279.5 a3.5,3.5 0 0 1 -3.5,3.5 H1324"/>
  <path d="M1327,1280 L1324,1283 L1327,1286"/>
 </g>
</svg>

<!-- ANNOTATIONS -->
<svg style="left:0;top:0" width="1" height="1">
 <defs><filter id="sh" x="-10%" y="-10%" width="120%" height="120%"><feDropShadow dx="0" dy="1" stdDeviation="1.2" flood-color="#000" flood-opacity="0.45"/></filter></defs>
 <g fill="#fb2d6e" filter="url(#sh)">
  <path d="M133.1,620 L146.6,607.6 L235.7,520 L280.4,473.7 L365.9,385 L351.8,376.6 L415.5,357.6 L392.6,420.2 L385.3,405.3 L252.2,520 L151.6,608.6 L137.2,623.6 A2.5,2.5 0 0 1 133.1,620Z"/>
  <path d="M1036.6,620.6 L1001.5,650 L880,748.8 L759.3,843.6 L752.4,828.3 L726.8,889.8 L791.7,873.4 L777.6,864.6 L888.9,760 L1011.8,650 L1040.4,624.6 A2.6,2.6 0 0 0 1036.6,620.6Z"/>
 </g>
 <g fill="none" stroke="#fb2d6e" stroke-width="6">
  <rect x="434.2" y="267.3" width="89.8" height="41.7" rx="1.5"/>
  <rect x="528.3" y="931.7" width="174.1" height="58.7" rx="1.5"/>
 </g>
</svg>
<svg style="left:0;top:0" width="1" height="1">
 <path d="M99.3,648 H104.2 V678 H99.3 V657.8 H92.4 V653.4 C96,653.4 98.6,651.5 99.3,648 Z" fill="#fb2d6e"/>
 <path d="M1071.2,575.8 C1071.2,571.2 1075,570.2 1079.8,570.2 C1084.7,570.2 1087.9,573 1087.9,577 C1087.9,581 1084.6,583 1080.5,585.3 C1074.5,588.8 1071.3,591.5 1071.3,596 H1090.2" fill="none" stroke="#fb2d6e" stroke-width="4.4"/>
</svg>
</body></html>
